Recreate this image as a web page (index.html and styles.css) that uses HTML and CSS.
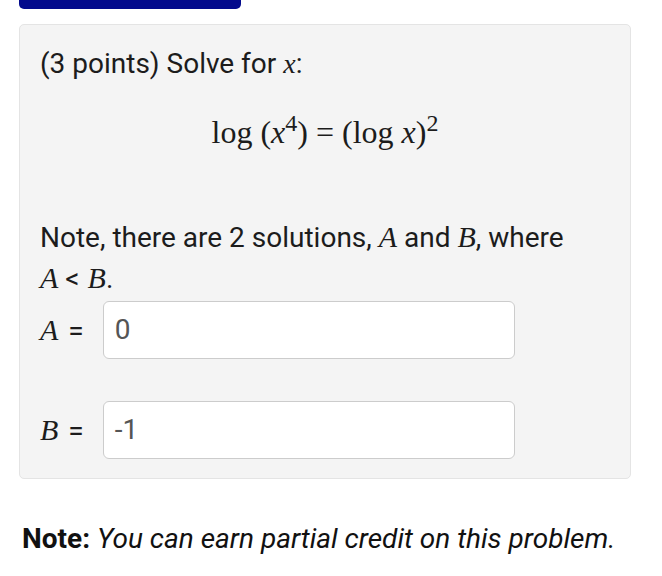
FILE: index.html
```html
<!DOCTYPE html>
<html>
<head>
<meta charset="utf-8">
<link rel="stylesheet" href="styles.css">
</head>
<body>
<div class="topbar"></div>
<div class="panel">
  <p class="title">(3 points) Solve for <span class="mi">x</span>:</p>
  <div class="equation"><span class="fn">log</span> (<span class="mi">x</span><sup>4</sup>) = (<span class="fn">log</span> <span class="mi">x</span>)<sup>2</sup></div>
  <p class="note">Note, there are 2 solutions, <span class="mv">A</span> and <span class="mv">B</span>, where <span class="nowrap"><span class="mv">A</span><span class="rel">&lt;</span><span class="mv">B</span>.</span></p>
  <div class="answer-row">
    <label class="label"><span class="mv">A</span><span class="eq">=</span></label>
    <div class="input">0</div>
  </div>
  <div class="answer-row row-b">
    <label class="label"><span class="mv">B</span><span class="eq">=</span></label>
    <div class="input">-1</div>
  </div>
</div>
<p class="footer"><b>Note:</b> <i>You can earn partial credit on this problem.</i></p>
</body>
</html>
```
FILE: styles.css
```css
html, body {
  margin: 0;
  padding: 0;
  background: #ffffff;
}
body {
  font-family: Roboto, "Liberation Sans", sans-serif;
  font-size: 28px;
  color: #1c1c1c;
  width: 662px;
}
.topbar {
  margin-left: 19px;
  width: 222px;
  height: 9px;
  background: #030a8c;
  border-radius: 0 0 5px 5px;
}
.panel {
  margin: 15px 0 0 19px;
  width: 612px;
  box-sizing: border-box;
  background: #f4f4f4;
  border: 1px solid #e4e4e4;
  border-radius: 5px;
  padding: 22px 20px 19px 20px;
}
.title {
  margin: 0;
  line-height: 34px;
}
.mi {
  font-family: "Liberation Serif", serif;
  font-style: italic;
}
.equation {
  margin-top: 31px;
  text-align: center;
  font-family: "Liberation Serif", serif;
  font-size: 32px;
  line-height: 40px;
  height: 40px;
}
.equation sup {
  font-size: 24px;
  line-height: 0;
  vertical-align: 12px;
}
.note {
  margin: 65px 0 0 0;
  line-height: 40px;
}
.nowrap {
  white-space: nowrap;
}
.rel {
  margin: 0 8px 0 7px;
}
.mv {
  font-family: "Liberation Serif", serif;
  font-style: italic;
  font-size: 30px;
}
.eq {
  margin-left: 10px;
}
.answer-row {
  display: flex;
  align-items: center;
  margin-top: 2px;
  line-height: 34px;
}
.row-b {
  margin-top: 42px;
}
.label {
  margin-right: 19px;
}
.input {
  width: 412px;
  height: 58px;
  box-sizing: border-box;
  background: #ffffff;
  border: 1px solid #cccccc;
  border-radius: 6px;
  padding-left: 11px;
  color: #555555;
  line-height: 56px;
}
.footer {
  margin: 43px 0 0 22px;
  line-height: 34px;
  color: #111111;
}
.footer b {
  font-weight: 700;
}
```
